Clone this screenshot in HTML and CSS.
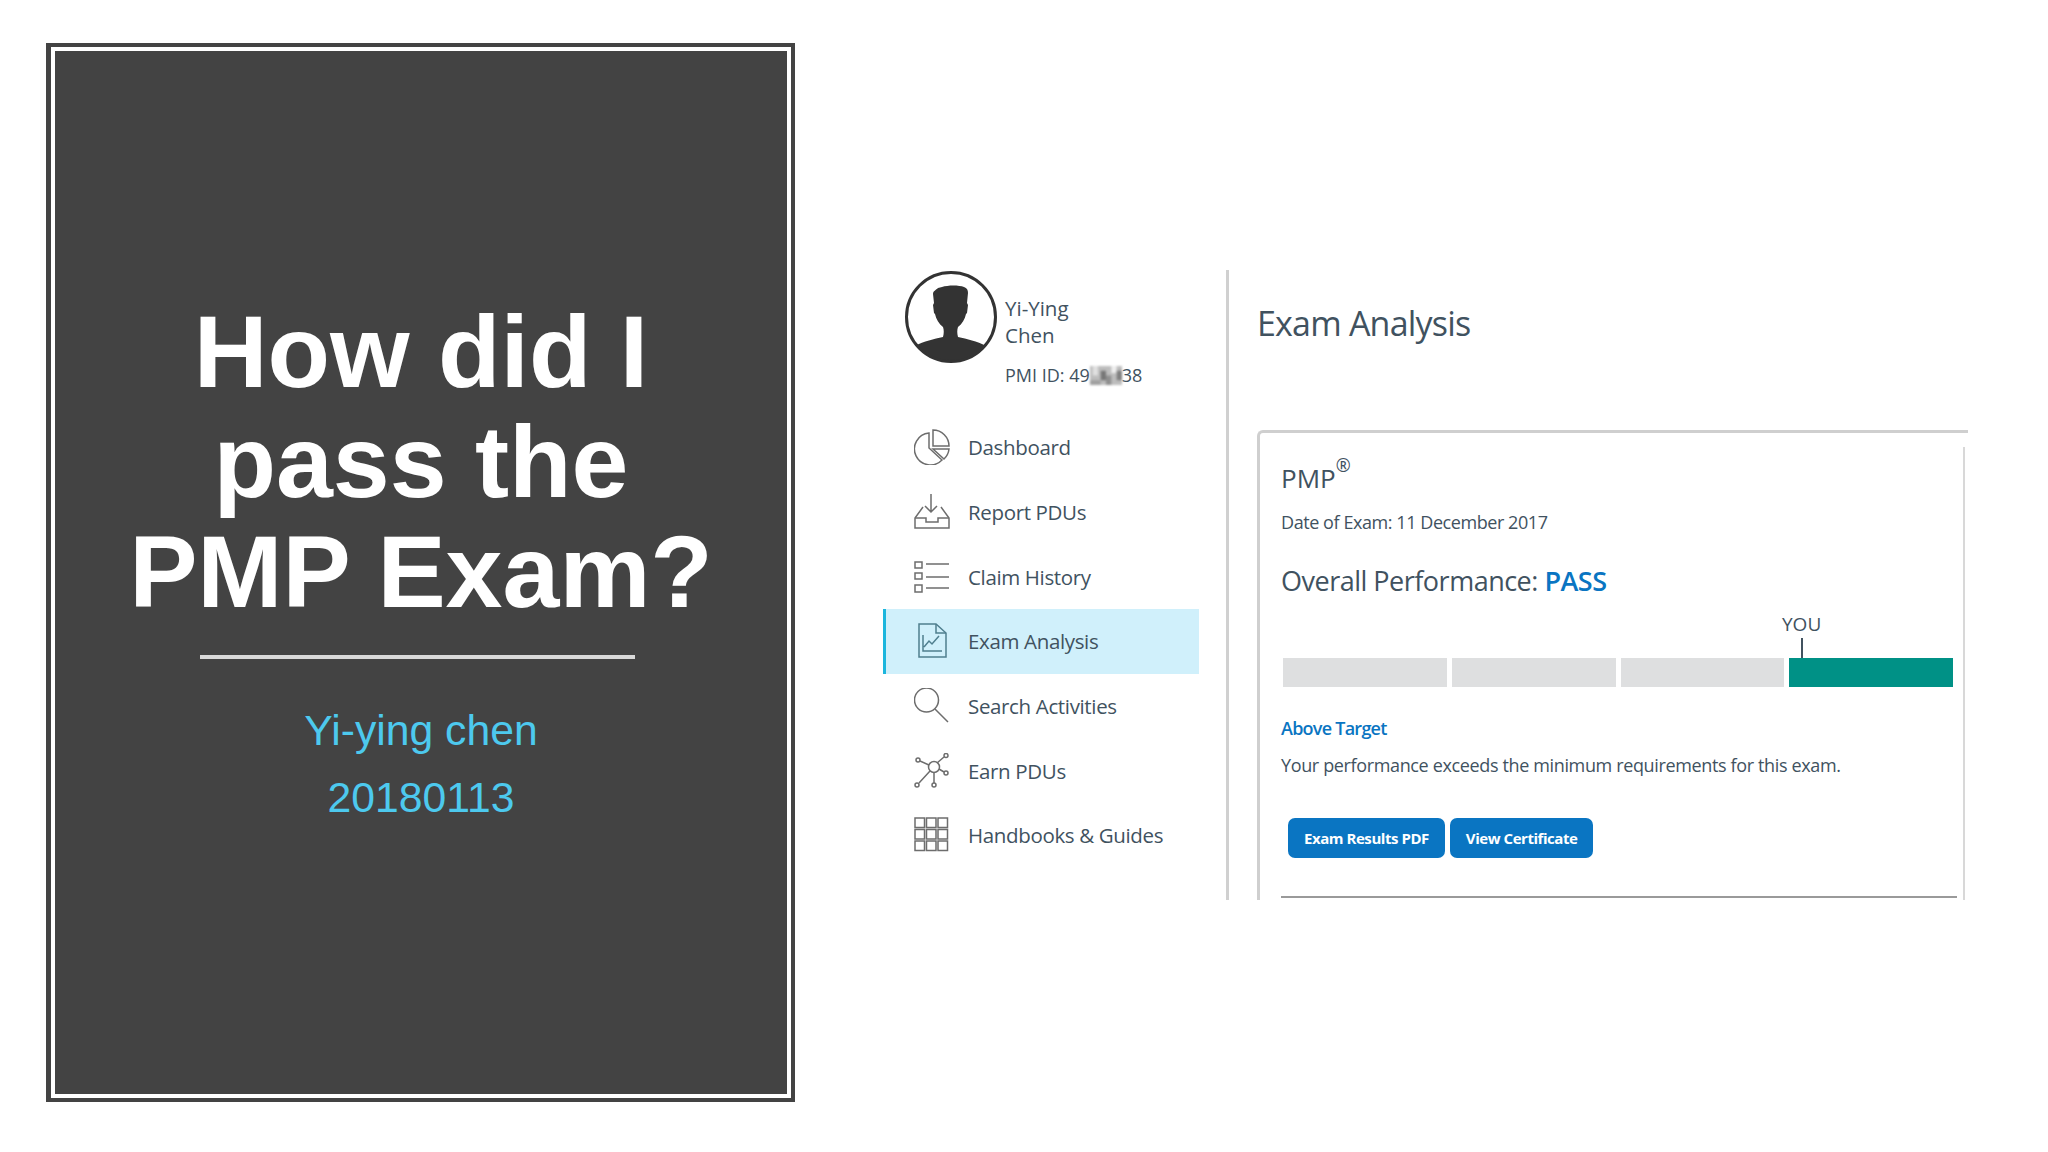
FILE: index.html
```html
<!DOCTYPE html>
<html lang="en">
<head>
    <meta charset="UTF-8">
    <title>How did I pass the PMP Exam?</title>
    <link rel="stylesheet" href="styles.css">
</head>
<body>

    <!-- Title card -->
    <section class="cover">
        <div class="cover-inner">
            <h1>How did I<br>pass the<br>PMP Exam?</h1>
            <div class="cover-rule"></div>
            <p class="cover-sub">Yi-ying chen<br>20180113</p>
        </div>
    </section>

    <!-- Portal screenshot -->
    <section class="portal">
        <aside class="side">
            <div class="profile">
                <svg class="avatar" viewBox="0 0 92 94">
                    <defs><clipPath id="ring"><circle cx="46" cy="47" r="44"/></clipPath></defs>
                    <g clip-path="url(#ring)" fill="#333">
                        <path d="M10 94V76c9-5 19-7 28-9 1-4 1-7 0-10-4-3-7-8-8-13l-1-1-1-8 1-2-1-9c0-3 3-4 5-6l4-1c6-2 17-2 22 0 3 1 4 3 4 6l-1 10 1 2-1 8-1 1c-1 5-4 10-8 13-1 3-1 6 0 10 9 2 19 4 28 9v18z"/>
                    </g>
                    <circle cx="46" cy="47" r="44.500" fill="none" stroke="#333" stroke-width="3"/>
                </svg>
                <div class="who">
                    <div class="who-name">Yi-Ying<br>Chen</div>
                    <div class="who-id">PMI ID: 49<svg class="mosaic" viewBox="0 0 6 4" preserveAspectRatio="none">
                        <rect width="6" height="4" fill="#bdbdbd"/>
                        <rect x="0.500" width="1" height="2" fill="#e0e0e0"/>
                        <rect x="2" y="1" width="1" height="2" fill="#777"/>
                        <rect x="3" y="2" width="1" height="2" fill="#8f8f8f"/>
                        <rect x="4" width="1" height="1.500" fill="#eee"/>
                        <rect x="5" y="1" width="1" height="2" fill="#808080"/>
                        <rect y="3" width="2" height="1" fill="#a0a0a0"/>
                    </svg>38</div>
                </div>
            </div>
            <nav class="menu">
                <a class="menu-item">
                    <svg class="icon" viewBox="0 0 36 36"><path d="M15 4A16 16 0 1 0 28 31L15 19z"/><path d="M19 1a16 16 0 0 1 16 16H19z"/><path d="M19 20h16a16 16 0 0 1-5 10z"/></svg>
                    Dashboard
                </a>
                <a class="menu-item">
                    <svg class="icon" viewBox="0 0 36 36"><path d="M17 0v18M11 12l6 6 6-6"/><path d="M9 13 1 24v10h34V24l-8-11"/><path d="M1 24h11v4h12v-4h11"/></svg>
                    Report PDUs
                </a>
                <a class="menu-item">
                    <svg class="icon" viewBox="0 0 36 36"><path d="M1 3h7v6H1zM1 14h7v6H1zM1 26h7v7H1zM12 5h23M12 18h23M12 29h23"/></svg>
                    Claim History
                </a>
                <a class="menu-item active">
                    <svg class="icon" viewBox="0 0 36 36"><path d="M5 1h17l10 9v24H5z"/><path d="M22 1v9h10"/><path d="M9 12v16h19M10 24l5-6 3 3 7-8"/></svg>
                    Exam Analysis
                </a>
                <a class="menu-item">
                    <svg class="icon" viewBox="0 0 36 36"><circle cx="12.500" cy="12" r="12"/><path d="M21 21l13 13"/></svg>
                    Search Activities
                </a>
                <a class="menu-item">
                    <svg class="icon" viewBox="0 0 36 36"><circle cx="20" cy="14" r="5.500"/><circle cx="4" cy="7" r="2"/><circle cx="32" cy="2.500" r="2"/><circle cx="32" cy="20" r="2"/><circle cx="20" cy="32" r="2"/><circle cx="3" cy="32" r="2"/><path d="M6 8l9 4M30 4l-7 6M25 16l5 3M20 20v10M16 18 5 30"/></svg>
                    Earn PDUs
                </a>
                <a class="menu-item">
                    <svg class="icon" viewBox="0 0 36 36"><path d="M1 1h9.500v9.500H1zM12.500 1H22v9.500h-9.500zM24 1h9.500v9.500H24zM1 12.500h9.500V22H1zM12.500 12.500H22V22h-9.500zM24 12.500h9.500V22H24zM1 24h9.500v9.500H1zM12.500 24H22v9.500h-9.500zM24 24h9.500v9.500H24z"/></svg>
                    Handbooks &amp; Guides
                </a>
            </nav>
        </aside>

        <main class="analysis">
            <h2>Exam Analysis</h2>
            <div class="card">
                <div class="card-title">PMP<sup>®</sup></div>
                <div class="card-date">Date of Exam: 11 December 2017</div>
                <div class="card-overall">Overall Performance: <span>PASS</span></div>
                <div class="you">YOU</div>
                <div class="meter">
                    <div class="seg"></div>
                    <div class="seg"></div>
                    <div class="seg"></div>
                    <div class="seg hit"></div>
                </div>
                <div class="level">Above Target</div>
                <div class="level-text">Your performance exceeds the minimum requirements for this exam.</div>
                <div class="actions">
                    <a class="btn">Exam Results PDF</a>
                    <a class="btn">View Certificate</a>
                </div>
                <div class="card-end"></div>
            </div>
        </main>
    </section>

</body>
</html>
```

FILE: styles.css
```css
body {
    margin: 0;
    width: 2048px;
    height: 1152px;
    display: flex;
    align-items: flex-start;
    background-color: #fff;
    overflow: hidden;
    font-family: "Open Sans", "Noto Sans", sans-serif;
}

/* Title card */
.cover {
    box-sizing: border-box;
    width: 749px;
    height: 1059px;
    margin: 43px 0 0 46px;
    padding: 4px 4px 4px 5px;
    background-color: #434343;
    flex: none;
}

.cover-inner {
    box-sizing: border-box;
    height: 100%;
    padding-top: 246px;
    border: 4px solid #fff;
    background-color: #434343;
    text-align: center;
    display: flex;
    flex-direction: column;
    align-items: center;
}

.cover h1 {
    margin: 0;
    font-family: "Liberation Sans", Arial, sans-serif;
    font-size: 102.300px;
    line-height: 110px;
    font-weight: bold;
    color: #fff;
}

.cover-rule {
    width: 435px;
    height: 4px;
    margin: 28px 7px 0 0;
    background-color: #d9d9d9;
}

.cover-sub {
    margin: 38px 0 0;
    font-family: "Liberation Sans", Arial, sans-serif;
    font-size: 42.700px;
    line-height: 67px;
    color: #4dc9ee;
}

/* Portal */
.portal {
    display: flex;
    margin: 270px 0 0 88px;
    width: 1085px;
    height: 630px;
    color: #41525f;
}

.side {
    box-sizing: border-box;
    width: 346px;
    height: 100%;
    border-right: 3px solid #d0d0d0;
}

.profile {
    display: flex;
    padding-left: 22px;
    height: 124px;
}

.avatar {
    width: 92px;
    height: 94px;
    flex: none;
}

.who {
    margin-left: 8px;
    padding-top: 25px;
    font-size: 20.500px;
}

.who-name {
    line-height: 27px;
}

.who-id {
    display: flex;
    align-items: center;
    margin-top: 13px;
    font-size: 18px;
    line-height: 26px;
}

.mosaic {
    width: 32px;
    height: 19px;
    filter: blur(1px);
}

.menu {
    display: flex;
    flex-direction: column;
    margin-top: 21px;
    width: 316px;
}

.menu-item {
    box-sizing: border-box;
    height: 64.700px;
    display: flex;
    align-items: center;
    gap: 18px;
    padding-left: 28px;
    border-left: 3px solid transparent;
    font-size: 20.500px;
    font-weight: 500;
    letter-spacing: -0.350px;
}

.menu-item.active {
    background-color: #d0f0fb;
    border-left-color: #1cb6dd;
}

.icon {
    width: 36px;
    height: 36px;
    flex: none;
    fill: none;
    stroke: #6d6d6d;
    stroke-width: 1.500;
}

.menu-item.active .icon {
    stroke: #4f7f8f;
}

/* Exam analysis */
.analysis {
    padding-left: 28px;
    flex: 1;
}

.analysis h2 {
    margin: 30px 0 0;
    font-size: 34px;
    line-height: 46px;
    font-weight: 500;
    letter-spacing: -0.800px;
}

.card {
    box-sizing: border-box;
    height: 470px;
    margin-top: 84px;
    padding: 23px 0 0 21px;
    border: 3px solid #cfcfcf;
    border-right: 0;
    border-bottom: 0;
    border-radius: 6px 0 0 0;
    position: relative;
}

.card-title {
    font-size: 26px;
    line-height: 44px;
}

.card-title sup {
    font-size: 18px;
    line-height: 0;
    vertical-align: 16px;
}

.card-date {
    margin-top: 9px;
    font-size: 18px;
    line-height: 26px;
    letter-spacing: -0.430px;
}

.card-overall {
    margin-top: 26px;
    font-size: 27px;
    line-height: 40px;
    font-weight: 500;
    letter-spacing: -0.500px;
}

.card-overall span {
    color: #0a75c2;
    font-weight: 600;
}

.you {
    margin-top: 10px;
    padding-left: 501px;
    font-size: 19px;
    line-height: 26px;
}

.meter {
    display: flex;
    gap: 5px;
    width: 670px;
    height: 29px;
    margin: 21px 0 0 2px;
    position: relative;
}

.meter::before {
    content: "";
    position: absolute;
    left: 518px;
    top: -20px;
    width: 2px;
    height: 20px;
    background-color: #41525f;
}

.seg {
    flex: 1;
    background-color: #dedfe0;
}

.seg.hit {
    background-color: #009186;
}

.level {
    margin-top: 28px;
    font-size: 18px;
    line-height: 26px;
    font-weight: 600;
    color: #0a75c2;
    letter-spacing: -0.750px;
}

.level-text {
    margin-top: 11px;
    font-size: 18px;
    line-height: 26px;
    letter-spacing: -0.360px;
}

.actions {
    display: flex;
    gap: 5px;
    margin: 40px 0 0 7px;
}

.btn {
    display: flex;
    align-items: center;
    padding: 0 16px;
    height: 40px;
    border-radius: 7px;
    background-color: #0a75c2;
    color: #fff;
    font-size: 15px;
    font-weight: 700;
    letter-spacing: -0.450px;
}

.card-end {
    margin: 38px 0 0 0;
    width: 676px;
    height: 2px;
    background-color: #9a9a9a;
}

/* thin right edge, starts a bit under the top border */
.card::after {
    content: "";
    position: absolute;
    right: 3px;
    top: 14px;
    bottom: 0;
    width: 2px;
    background-color: #d8d8d8;
}
```
